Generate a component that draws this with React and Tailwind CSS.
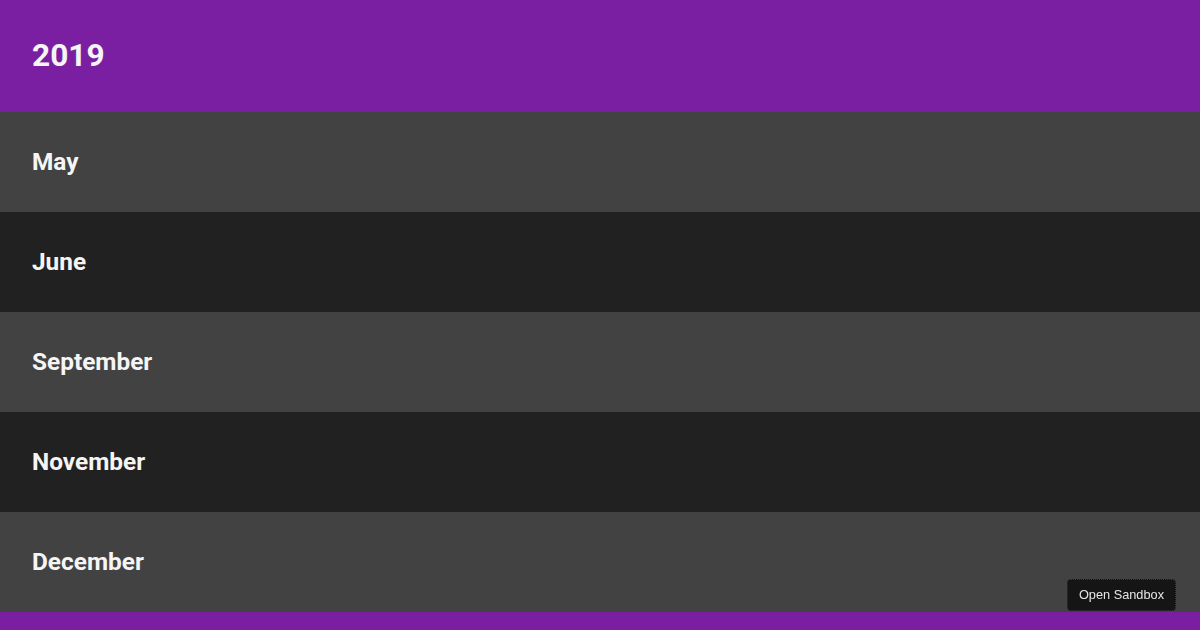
export default function App() {
  const months = ["May", "June", "September", "November", "December"];
  return (
    <div className="w-full min-h-screen bg-[#7b1fa2]" style={{ fontFamily: "Roboto, 'Liberation Sans', sans-serif" }}>
      <div className="h-[112px] flex items-center px-8 bg-[#7b1fa2]">
        <h1 className="text-[31.6px] font-bold text-[#f5f5f5] leading-none">2019</h1>
      </div>
      {months.map((m, i) => (
        <div
          key={m}
          className={
            "h-[100px] flex items-center px-8 " +
            (i % 2 === 0 ? "bg-[#424242]" : "bg-[#212121]")
          }
        >
          <h2 className="text-[24.4px] font-bold text-[#f5f5f5] leading-none">{m}</h2>
        </div>
      ))}
      <div className="h-[112px] bg-[#7b1fa2]" />
      <button
        className="fixed right-[24px] bottom-[19px] h-[32px] w-[109px] flex items-center justify-center rounded-[4px] bg-[#151515] border border-dotted border-[#3a3a3a] text-[12.75px] text-[#e6e6e6]"
        style={{ fontFamily: "'Liberation Sans', Arial, sans-serif" }}
      >
        Open Sandbox
      </button>
    </div>
  );
}
